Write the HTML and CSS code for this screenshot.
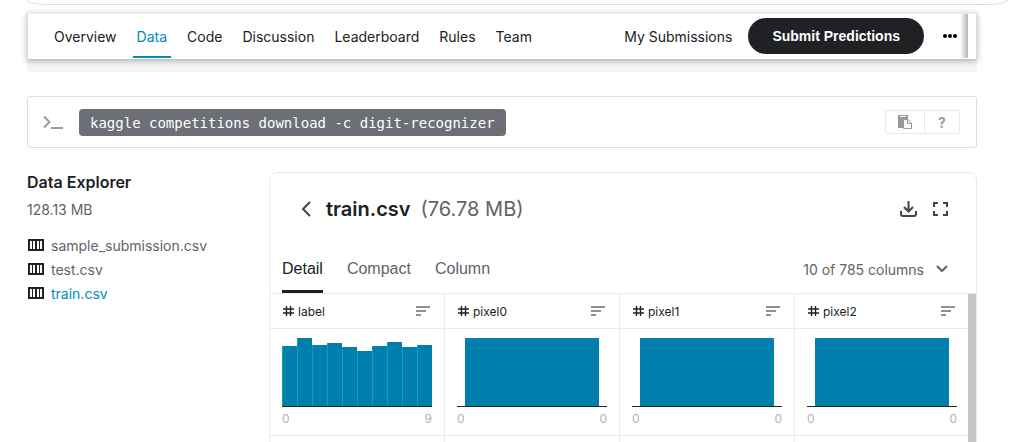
FILE: index.html
```html
<!DOCTYPE html>
<html lang="en">
<head>
<meta charset="utf-8">
<title>Digit Recognizer | Data</title>
<link rel="stylesheet" href="styles.css">
</head>
<body>
<svg width="0" height="0" class="defs" aria-hidden="true">
  <symbol id="columns-icon" viewBox="0 0 16 12"><path d="M0 0H16V12H0ZM2 2V10H4V2ZM5 2V10H7V2ZM9 2V10H11V2ZM12 2V10H14V2Z" fill="#202124" fill-rule="evenodd"/></symbol>
  <symbol id="hash-icon" viewBox="0 0 11 10"><path d="M0 3H11M0 7H11M3.500 0V10M7.500 0V10" fill="none" stroke="#202124" stroke-width="1.400"/></symbol>
  <symbol id="sort-icon" viewBox="0 0 14 10"><path d="M0 1H14M0 5H10M0 9H5" fill="none" stroke="#6a6d70" stroke-width="1.600"/></symbol>
</svg>
<div class="page">
  <div class="hero-edge"></div>
  <nav class="nav">
    <div class="nav-tabs">
      <a class="nav-link" href="#">Overview</a>
      <a class="nav-link active" href="#">Data</a>
      <a class="nav-link" href="#">Code</a>
      <a class="nav-link" href="#">Discussion</a>
      <a class="nav-link" href="#">Leaderboard</a>
      <a class="nav-link" href="#">Rules</a>
      <a class="nav-link" href="#">Team</a>
    </div>
    <a class="nav-link submissions" href="#">My Submissions</a>
    <button class="submit" type="button">Submit Predictions</button>
    <button class="more" type="button" aria-label="More">
      <svg width="14" height="4" viewBox="0 0 14 4"><circle cx="2" cy="2" r="2"/><circle cx="7" cy="2" r="2"/><circle cx="12" cy="2" r="2"/></svg>
    </button>
    <div class="nav-fade"></div>
  </nav>
  <div class="nav-shade"></div>

  <section class="command">
    <svg class="prompt" width="20" height="14" viewBox="0 0 20 14"><path d="M1 1.500L6.500 7L1 12.500M8 13H20" fill="none" stroke="#9a9a9a" stroke-width="2"/></svg>
    <code class="code">kaggle competitions download -c digit-recognizer</code>
    <div class="command-actions">
      <button class="copy" type="button" aria-label="Copy">
        <svg width="14" height="14" viewBox="0 0 14 14"><path d="M0 0H10V5H5V13H0Z" fill="#999"/><path d="M2 1.500H8" stroke="#fff"/><path d="M5.500 4.500H10L13.500 8.500V13.500H5.500Z" fill="#fff" stroke="#999"/><path d="M9.500 4.500V8.500H13.500" fill="none" stroke="#999"/></svg>
      </button>
      <button class="help" type="button">?</button>
    </div>
  </section>

  <main class="explorer">
    <aside class="files">
      <h2 class="files-title">Data Explorer</h2>
      <p class="files-size">128.13 MB</p>
      <ul class="file-list">
        <li><a class="file" href="#"><svg class="file-icon" width="16" height="12"><use href="#columns-icon"/></svg>sample_submission.csv</a></li>
        <li><a class="file" href="#"><svg class="file-icon" width="16" height="12"><use href="#columns-icon"/></svg>test.csv</a></li>
        <li><a class="file current" href="#"><svg class="file-icon" width="16" height="12"><use href="#columns-icon"/></svg>train.csv</a></li>
      </ul>
    </aside>

    <section class="card">
      <header class="card-head">
        <button class="icon-btn" type="button" aria-label="Back"><svg width="10" height="16" viewBox="0 0 10 16"><path d="M9 1L2 8L9 15" fill="none" stroke="#444" stroke-width="2"/></svg></button>
        <h1 class="card-title">train.csv</h1>
        <span class="card-size">(76.78 MB)</span>
        <div class="card-tools">
          <button class="icon-btn" type="button" aria-label="Download"><svg width="17" height="16" viewBox="0 0 17 16"><path d="M8.500 0V10M4 6L8.500 10.500L13 6M1 10V13Q1 15 3 15H14Q16 15 16 13V10" fill="none" stroke="#444" stroke-width="2"/></svg></button>
          <button class="icon-btn" type="button" aria-label="Fullscreen"><svg width="15" height="14" viewBox="0 0 15 14"><path d="M1 5V1H5M10 1H14V5M14 9V13H10M5 13H1V9" fill="none" stroke="#444" stroke-width="2"/></svg></button>
        </div>
      </header>
      <div class="view-bar">
        <div class="views">
          <button class="view selected" type="button">Detail</button>
          <button class="view" type="button">Compact</button>
          <button class="view" type="button">Column</button>
        </div>
        <button class="columns" type="button">10 of 785 columns
          <svg width="12" height="8" viewBox="0 0 12 8"><path d="M1 1L6 6L11 1" fill="none" stroke="#5f6368" stroke-width="2"/></svg>
        </button>
      </div>
      <div class="grid-area">
        <div class="grid-scroll">
          <table class="data">
            <thead>
              <tr>
                <th><div class="col-head"><svg width="11" height="10"><use href="#hash-icon"/></svg><span class="col-name">label</span><svg class="sort" width="14" height="10"><use href="#sort-icon"/></svg></div></th>
                <th><div class="col-head"><svg width="11" height="10"><use href="#hash-icon"/></svg><span class="col-name">pixel0</span><svg class="sort" width="14" height="10"><use href="#sort-icon"/></svg></div></th>
                <th><div class="col-head"><svg width="11" height="10"><use href="#hash-icon"/></svg><span class="col-name">pixel1</span><svg class="sort" width="14" height="10"><use href="#sort-icon"/></svg></div></th>
                <th><div class="col-head"><svg width="11" height="10"><use href="#hash-icon"/></svg><span class="col-name">pixel2</span><svg class="sort" width="14" height="10"><use href="#sort-icon"/></svg></div></th>
              </tr>
            </thead>
            <tbody>
              <tr class="summary">
                <td>
                  <div class="bars many"><i style="height:60px"></i><i style="height:68px"></i><i style="height:61px"></i><i style="height:63px"></i><i style="height:59px"></i><i style="height:55px"></i><i style="height:60px"></i><i style="height:64px"></i><i style="height:59px"></i><i style="height:61px"></i></div>
                  <div class="range"><span>0</span><span>9</span></div>
                </td>
                <td><div class="bars single"><i style="height:68px"></i></div><div class="range"><span>0</span><span>0</span></div></td>
                <td><div class="bars single"><i style="height:68px"></i></div><div class="range"><span>0</span><span>0</span></div></td>
                <td><div class="bars single"><i style="height:68px"></i></div><div class="range"><span>0</span><span>0</span></div></td>
              </tr>
              <tr class="next"><td></td><td></td><td></td><td></td></tr>
            </tbody>
          </table>
        </div>
        <div class="scrollbar"></div>
      </div>
    </section>
  </main>
</div>
</body>
</html>
```
FILE: styles.css
```css
* { box-sizing: border-box; }
body { margin: 0; background: #fff; color: #202124; font-family: Inter, sans-serif; font-size: 14px; }
button { margin: 0; padding: 0; border: 0; background: none; color: inherit; font: inherit; cursor: pointer; }
a { color: inherit; text-decoration: none; }
svg { display: block; flex: none; }
.defs { position: absolute; }

.page { height: 100vh; overflow: hidden; padding: 0 35px 0 27px; }
.hero-edge { height: 5px; margin-right: -31px; border: 1px solid #dadce0; border-top: 0; border-radius: 0 0 20px 20px / 0 0 5px 5px; }

.nav { display: flex; align-items: center; height: 47px; margin-top: 8px; padding-left: 22px; padding-bottom: 1px; background: #fff; border: 1px solid #dcdcdc; border-top-color: #eee; border-bottom-color: #c4c6c6; box-shadow: 0 1px 6px rgba(0, 0, 0, .3); position: relative; }
.nav-tabs { display: flex; gap: 12px; flex: 1; align-self: stretch; }
.nav-link { display: flex; align-items: center; padding: 2px 4px 0; border-bottom: 2px solid transparent; white-space: nowrap; }
.nav-link.active { color: #008abc; border-color: #008abc; }
.submissions { align-self: stretch; margin-right: 12px; }
.submit { height: 36px; padding: 0 24px; border-radius: 18px; background: #202124; color: #fff; font: bold 14px "Liberation Sans", Arial, sans-serif; }
.more { margin: 0 3px 0 19px; }
.nav-fade { align-self: stretch; width: 8px; margin-right: 8px; background: linear-gradient(to right, #fff, #b5b5b5); }
.nav-shade { height: 12px; background: #f5f5f5; }

.command { display: flex; align-items: center; height: 52px; margin-top: 24px; padding: 0 16px 0 15px; border: 1px solid #dcdedf; border-radius: 3px; }
.code { margin-left: 16px; padding: 1px 11px 0; border-radius: 4px; background: #6c7076; color: #fff; font: 14px/26px "DejaVu Sans Mono", monospace; white-space: nowrap; }
.command-actions { display: flex; height: 24px; margin-left: auto; border: 1px solid #e8e8e8; border-radius: 3px; }
.copy { width: 39px; display: flex; align-items: center; justify-content: center; border-right: 1px solid #e8e8e8; }
.help { width: 34px; color: #999; font-size: 14px; font-weight: 700; }

.explorer { display: grid; grid-template-columns: 242px minmax(0, 1fr); margin-top: 24px; align-items: start; }
.files-title { margin: 0; font-size: 16px; font-weight: 600; line-height: 20px; }
.files-size { margin: 8px 0 13px; color: #5f6368; line-height: 20px; }
.file-list { margin: 0; padding: 0 0 0 1px; list-style: none; }
.file { display: flex; align-items: center; gap: 7px; height: 24px; color: #5f6368; }
.file.current { color: #008abc; }

.card { border: 1px solid #e8eaed; border-radius: 8px; }
.card-head { display: flex; align-items: center; height: 72px; padding: 0 28px 0 31px; font-size: 20px; }
.card-title { margin: 0 10px 0 15px; font-size: 20px; font-weight: 600; }
.card-size { color: #5f6368; }
.card-tools { display: flex; align-items: center; gap: 16px; margin-left: auto; }
.view-bar { display: flex; justify-content: space-between; height: 49px; padding: 0 28px 0 12px; border-bottom: 1px solid #e8eaed; }
.views { display: flex; gap: 24px; }
.view { padding-top: 2px; border-bottom: 3px solid transparent; color: #5f6368; font: 16px "Liberation Sans", Arial, sans-serif; }
.view.selected { color: #202124; border-color: #202124; }
.columns { display: flex; align-items: center; gap: 12px; color: #5f6368; }

.grid-area { display: flex; }
.grid-scroll { flex: 1; min-width: 0; overflow: hidden; }
.scrollbar { width: 8px; background: #c4c5c6; }
.data { width: 100%; min-width: 700px; table-layout: fixed; border-collapse: separate; border-spacing: 0; }
.data th, .data td { padding: 0 12px; border-right: 1px solid #e8eaed; border-bottom: 1px solid #e8eaed; font-weight: 400; }
.col-head { display: flex; align-items: center; gap: 4px; height: 34px; padding: 0 2px 0 1px; font-size: 12px; }
.sort { margin-left: auto; }
.bars { display: flex; align-items: flex-end; height: 78px; border-bottom: 1px solid #202124; }
.bars i { flex: 1; background: #007fad; }
.many i { border-left: 1px solid #109dc0; }
.single { padding: 0 8px; }
.range { display: flex; justify-content: space-between; height: 28px; line-height: 24px; font-size: 12px; color: #b0b2b4; }
.next td { height: 32px; }
```
